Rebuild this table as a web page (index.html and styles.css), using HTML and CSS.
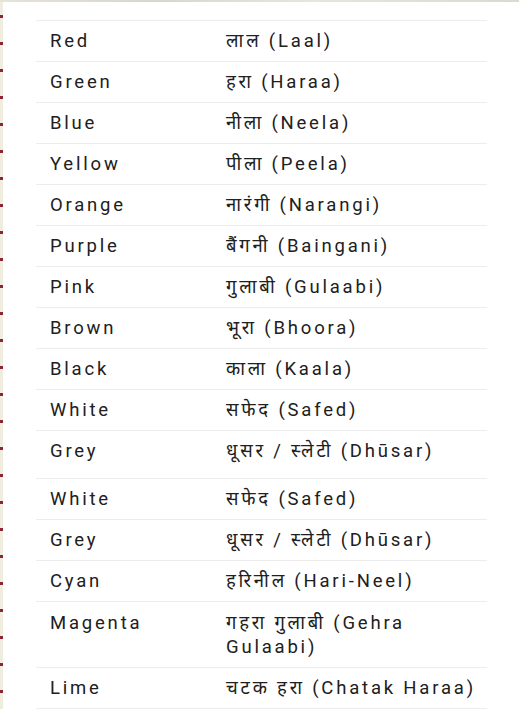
FILE: index.html
```
<!DOCTYPE html>
<html lang="hi">
<head>
<meta charset="utf-8">
<title>Colours in Hindi</title>
<link rel="stylesheet" href="styles.css">
</head>
<body>
<div class="edge-top"></div>
<div class="frame">
  <div class="edge-left"></div>
  <main class="page">
    <table class="colors">
      <tbody>
        <tr><td class="en">Red</td><td class="hi">लाल (Laal)</td></tr>
        <tr><td class="en">Green</td><td class="hi">हरा (Haraa)</td></tr>
        <tr><td class="en">Blue</td><td class="hi">नीला (Neela)</td></tr>
        <tr><td class="en">Yellow</td><td class="hi">पीला (Peela)</td></tr>
        <tr><td class="en">Orange</td><td class="hi">नारंगी (Narangi)</td></tr>
        <tr><td class="en">Purple</td><td class="hi">बैंगनी (Baingani)</td></tr>
        <tr><td class="en">Pink</td><td class="hi">गुलाबी (Gulaabi)</td></tr>
        <tr><td class="en">Brown</td><td class="hi">भूरा (Bhoora)</td></tr>
        <tr><td class="en">Black</td><td class="hi">काला (Kaala)</td></tr>
        <tr><td class="en">White</td><td class="hi">सफेद (Safed)</td></tr>
        <tr class="tall"><td class="en">Grey</td><td class="hi">धूसर / स्लेटी (Dhūsar)</td></tr>
        <tr><td class="en">White</td><td class="hi">सफेद (Safed)</td></tr>
        <tr><td class="en">Grey</td><td class="hi">धूसर / स्लेटी (Dhūsar)</td></tr>
        <tr><td class="en">Cyan</td><td class="hi">हरिनील (Hari-Neel)</td></tr>
        <tr class="wide"><td class="en">Magenta</td><td class="hi">गहरा गुलाबी (Gehra Gulaabi)</td></tr>
        <tr><td class="en">Lime</td><td class="hi">चटक हरा (Chatak Haraa)</td></tr>
      </tbody>
    </table>
  </main>
</div>
</body>
</html>
```
FILE: styles.css
```
html, body {
  margin: 0;
  padding: 0;
  background: #ffffff;
}
body {
  font-family: Roboto, "Noto Sans", "Noto Sans Devanagari", sans-serif;
  color: #202020;
}
.edge-top {
  height: 2px;
  background: linear-gradient(90deg, #e6e2d6, #d9d6cc 30%, #e8e5dc 60%, #dcd9cf);
}
.frame {
  display: flex;
}
.edge-left {
  width: 3px;
  flex: none;
  background:
    repeating-linear-gradient(180deg, transparent 0 13px, #8a2633 13px 16px, transparent 16px 27px),
    #f1ece0;
}
.page {
  flex: 1;
  padding: 18px 0 0 33px;
}
.colors {
  border-collapse: collapse;
  width: 451px;
  table-layout: fixed;
  font-size: 18.5px;
  line-height: 24px;
  letter-spacing: 2.8px;
}
.colors tr {
  border-top: 1px solid #ececec;
  border-bottom: 1px solid #ececec;
}
.colors td {
  padding: 8px 12px 8px 14px;
  vertical-align: top;
}
.colors .en {
  width: 150px;
}
.colors .hi {
  padding-right: 2px;
}
.colors .tall td {
  padding-bottom: 15px;
}
.colors .wide td {
  padding-top: 9px;
}
```
